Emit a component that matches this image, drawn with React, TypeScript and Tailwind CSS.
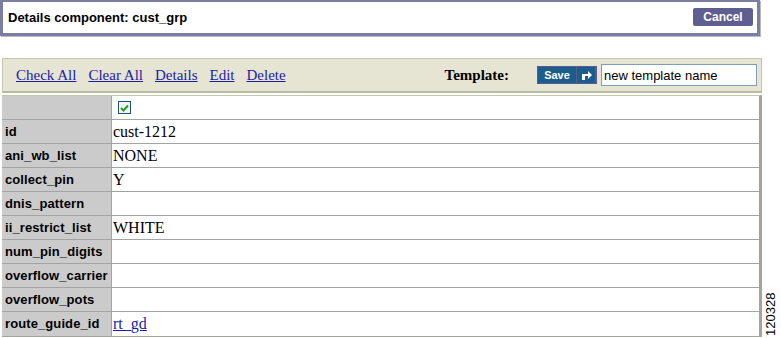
import React from "react";

const rows: { label: string; value?: string; link?: boolean }[] = [
  { label: "id", value: "cust-1212" },
  { label: "ani_wb_list", value: "NONE" },
  { label: "collect_pin", value: "Y" },
  { label: "dnis_pattern" },
  { label: "ii_restrict_list", value: "WHITE" },
  { label: "num_pin_digits" },
  { label: "overflow_carrier" },
  { label: "overflow_pots" },
  { label: "route_guide_id", value: "rt_gd", link: true },
];

const serif = "font-['Liberation_Serif',serif]";
const sans = "font-['Liberation_Sans',Arial,sans-serif]";

export default function App() {
  return (
    <div className={`relative w-[781px] h-[338px] bg-white overflow-hidden ${sans}`}>
      {/* header */}
      <div className="w-[760px] h-[36px] border-[3px] border-l-[3px] border-t-[2px] border-[#7d7ca3] bg-white flex items-center justify-between pl-[5px] pr-[4px] shadow-[1px_1px_0_#b9b8cc]">
        <span className="text-[13px] font-bold text-black">Details component: cust_grp</span>
        <button className="h-[18px] w-[60px] rounded-[2px] bg-[#5f5e91] text-white text-[12px] font-bold leading-none mb-[2px]">
          Cancel
        </button>
      </div>

      {/* toolbar */}
      <div className="mt-[22px] ml-[2px] w-[760px] h-[35px] bg-[#e6e4d2] border border-[#c9c6b0] border-b-[2px] border-b-[#bdbaa3] flex items-center pl-[13px] pr-[4px]">
        <div className={`flex gap-[12px] text-[15px] ${serif}`}>
          {["Check All", "Clear All", "Details", "Edit", "Delete"].map((t) => (
            <a key={t} href="#" className="text-[#1c1ca8] underline">
              {t}
            </a>
          ))}
        </div>
        <span className={`ml-auto mr-[28px] font-bold text-[15px] ${serif}`}>Template:</span>
        <button className="h-[18px] w-[60px] bg-[#5a5a8d] flex items-center pl-[1px] mr-[4px]">
          <span className="h-[16px] w-[38px] bg-[#1b5e8e] text-white text-[11px] font-bold flex items-center justify-center">
            Save
          </span>
          <span className="h-[16px] w-[18px] ml-[1px] bg-[#1b5e8e] flex items-center justify-center">
            <svg width="13" height="11" viewBox="0 0 13 11">
              <path d="M2 10 V4 H8 V1 L12 5 L8 9 V6 H5 V10 Z" fill="white" />
            </svg>
          </span>
        </button>
        <input
          readOnly
          value="new template name"
          className="h-[22px] w-[156px] border border-[#7f9db9] bg-white px-[2px] text-[13px] text-black outline-none"
        />
      </div>

      {/* table */}
      <div className="ml-[2px] mt-[2px] w-[760px] border-t border-t-[#c9c6b0] border-r-[3px] border-r-[#a8a39a] border-b border-b-[#a8a39a]">
        <div className="flex h-[24px] border-b border-[#a3a3a3]">
          <div className="w-[110px] bg-[#cbcbcb] border-r border-[#a3a3a3]" />
          <div className="flex-1 flex items-center pl-[6px]">
            <span className="w-[13px] h-[13px] border border-[#1c5180] bg-[#f3f3ef] flex items-center justify-center">
              <svg width="9" height="8" viewBox="0 0 9 8">
                <path d="M1 4 L3.5 6.5 L8 1.5" stroke="#21a121" strokeWidth="2" fill="none" />
              </svg>
            </span>
          </div>
        </div>
        {rows.map((r, i) => (
          <div
            key={r.label}
            className={`flex h-[24px] ${i < rows.length - 1 ? "border-b border-[#a3a3a3]" : ""}`}
          >
            <div className="w-[110px] bg-[#cbcbcb] border-r border-[#a3a3a3] flex items-center pl-[3px] text-[13px] font-bold text-black tracking-[0.1px]">
              {r.label}
            </div>
            <div className={`flex-1 flex items-center pl-[1px] text-[16px] text-black ${serif}`}>
              {r.link ? (
                <a href="#" className="text-[#1c1ca8] underline">
                  {r.value}
                </a>
              ) : (
                r.value
              )}
            </div>
          </div>
        ))}
      </div>

      {/* figure number */}
      <div className="absolute left-[764px] top-[336px] origin-top-left -rotate-90 text-[13px] text-black leading-none">
        120328
      </div>
    </div>
  );
}
